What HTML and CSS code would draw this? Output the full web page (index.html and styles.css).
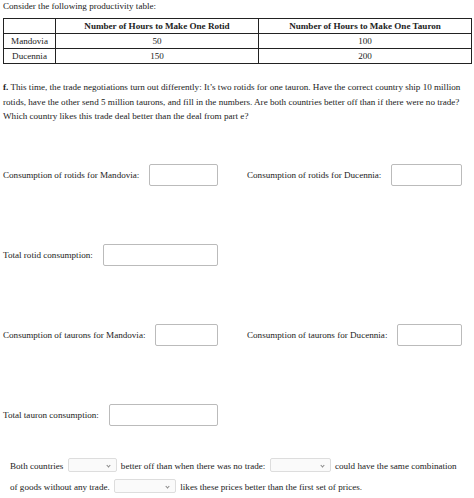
FILE: index.html
```html
<!DOCTYPE html>
<html>
<head>
<meta charset="utf-8">
<link rel="stylesheet" href="styles.css">
</head>
<body>
<div class="page">
  <p class="intro">Consider the following productivity table:</p>
  <table class="prod">
    <colgroup>
      <col class="c1"><col class="c2"><col class="c3">
    </colgroup>
    <tr><th></th><th>Number of Hours to Make One Rotid</th><th>Number of Hours to Make One Tauron</th></tr>
    <tr><td>Mandovia</td><td>50</td><td>100</td></tr>
    <tr><td>Ducennia</td><td>150</td><td>200</td></tr>
  </table>
  <p class="question"><b>f.</b> This time, the trade negotiations turn out differently: It’s two rotids for one tauron. Have the correct country ship 10 million rotids, have the other send 5 million taurons, and fill in the numbers. Are both countries better off than if there were no trade? Which country likes this trade deal better than the deal from part e?</p>

  <div class="row">
    <div class="field"><span class="lbl">Consumption of rotids for Mandovia:</span><span class="box"></span></div>
    <div class="field right"><span class="lbl">Consumption of rotids for Ducennia:</span><span class="box"></span></div>
  </div>
  <div class="row">
    <div class="field"><span class="lbl">Total rotid consumption:</span><span class="box"></span></div>
  </div>
  <div class="row">
    <div class="field"><span class="lbl">Consumption of taurons for Mandovia:</span><span class="box"></span></div>
    <div class="field right"><span class="lbl">Consumption of taurons for Ducennia:</span><span class="box"></span></div>
  </div>
  <div class="row">
    <div class="field"><span class="lbl">Total tauron consumption:</span><span class="box"></span></div>
  </div>

  <p class="final">Both countries <span class="sel s1"><span class="chev"></span></span> better off than when there was no trade: <span class="sel s2"><span class="chev"></span></span> could have the same combination of goods without any trade. <span class="sel s3"><span class="chev"></span></span> likes these prices better than the first set of prices.</p>
</div>
</body>
</html>
```

FILE: styles.css
```css
html, body {
  margin: 0;
  padding: 0;
  background: #ffffff;
}
body {
  font-family: "Liberation Serif", "Times New Roman", Times, serif;
}
.page {
  padding: 0 3px;
  font-family: "Liberation Serif", "Times New Roman", Times, serif;
  font-size: 9.1px;
  color: #222;
}
.intro {
  margin: 0;
  line-height: 12px;
}
.prod {
  margin-top: 6px;
  width: 468px;
  border-collapse: collapse;
  border: 1.5px solid #222;
  table-layout: fixed;
}
.c1 { width: 52px; }
.c2 { width: 203px; }
.c3 { width: 213px; }
.prod th, .prod td {
  border: 1px solid #222;
  height: 14px;
  padding: 0;
  text-align: center;
  font-weight: normal;
  line-height: 14px;
}
.prod th {
  font-weight: bold;
}
.question {
  margin: 16px 0 0 0;
  line-height: 14.5px;
}
.question b { font-weight: bold; }
.row {
  display: flex;
  height: 22px;
  margin-top: 58px;
}
.question + .row { margin-top: 40px; }
.field {
  display: flex;
  align-items: center;
  width: 215px;
  gap: 10px;
}
.field.right {
  margin-left: 29px;
}
.lbl {
  white-space: nowrap;
}
.box {
  flex: 1;
  height: 20px;
  border: 1px solid #bbb;
  border-radius: 2px;
  background: #fff;
}
.final {
  margin: 30px 13px 0 7px;
  line-height: 21px;
}
.sel {
  display: inline-block;
  position: relative;
  height: 12px;
  vertical-align: -3px;
  border: 1px solid #ddd;
  border-radius: 2px;
  background: #fafafa;
  margin: 0 2px;
}
.s1 { width: 47px; }
.s2 { width: 59px; }
.s3 { width: 60px; }
.chev {
  position: absolute;
  right: 6px;
  top: 5px;
  width: 2px;
  height: 2px;
  border-right: 1px solid #888;
  border-bottom: 1px solid #888;
  transform: rotate(45deg);
}
```
